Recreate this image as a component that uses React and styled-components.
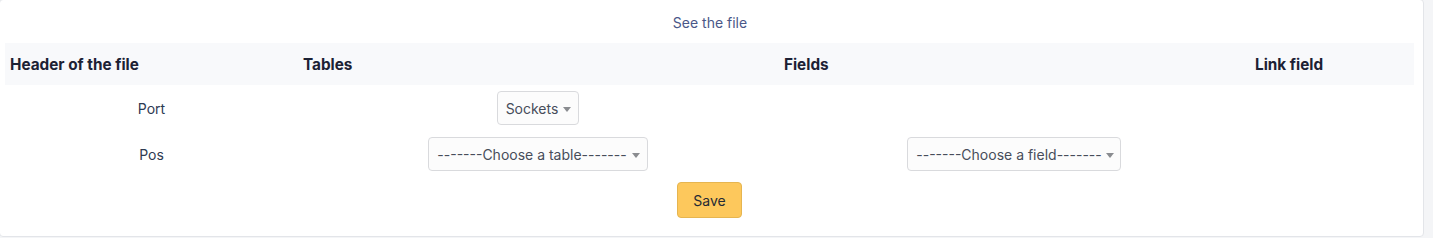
import styled, { createGlobalStyle } from "styled-components";

const GlobalStyle = createGlobalStyle`
  body {
    margin: 0;
    background: #f4f5f7;
    font-family: "Inter", "Liberation Sans", Arial, sans-serif;
    font-size: 14px;
    color: #2b3245;
  }
`;

const Card = styled.div`
  box-sizing: border-box;
  width: 1425px;
  height: 238px;
  margin: -1px 0 0 -1px;
  padding: 14px 10px 0 5px;
  background: #ffffff;
  border: 1px solid #e3e5e9;
  border-radius: 4px;
  display: flex;
  flex-direction: column;
  align-items: stretch;
  overflow: hidden;
`;

const FileLink = styled.a`
  align-self: center;
  line-height: 18px;
  color: #4a5788;
  text-decoration: none;
  margin-bottom: 11px;
  margin-left: 2px;
  cursor: pointer;
`;

const Grid = styled.div`
  display: grid;
  grid-template-columns: 293px 480px 472px 164px;
`;

const HeadCell = styled.div`
  height: 42px;
  background: #f8f9fb;
  display: flex;
  align-items: center;
  padding-left: ${(p) => p.$pad || 5}px;
  font-size: 15.3px;
  font-weight: 700;
  color: #1c2134;
`;

const Cell = styled.div`
  height: 46px;
  display: flex;
  align-items: center;
  justify-content: center;
  color: #2e3a52;
`;

const Select = styled.div`
  height: 34px;
  box-sizing: border-box;
  display: inline-flex;
  align-items: center;
  gap: ${(p) => p.$gap || 6}px;
  padding: 0 ${(p) => p.$right || 9}px 0 8px;
  background: #fcfcfc;
  border: 1px solid #d9dadd;
  border-radius: 4px;
  color: #474d5a;
  cursor: pointer;
`;

const Caret = styled.span`
  width: 0;
  height: 0;
  border-left: 4px solid transparent;
  border-right: 4px solid transparent;
  border-top: 5px solid #8a8c90;
  margin-top: 2px;
`;

const Footer = styled.div`
  display: flex;
  justify-content: center;
  padding-top: 5px;
  padding-left: 1px;
`;

const SaveButton = styled.button`
  width: 65px;
  height: 36px;
  background: #fdc85c;
  border: 1px solid #e6b550;
  border-radius: 4px;
  font-family: inherit;
  font-size: 14px;
  color: #262a35;
  cursor: pointer;
`;

const headers = [
  { label: "Header of the file", pad: 5 },
  { label: "Tables", pad: 5 },
  { label: "Fields", pad: 6 },
  { label: "Link field", pad: 5 },
];

const SelectBox = ({ children, gap, right }) => (
  <Select $gap={gap} $right={right}>
    <span>{children}</span>
    <Caret />
  </Select>
);

export default function App() {
  return (
    <>
      <GlobalStyle />
      <Card>
        <FileLink>See the file</FileLink>
        <Grid>
          {headers.map((h) => (
            <HeadCell key={h.label} $pad={h.pad}>
              {h.label}
            </HeadCell>
          ))}

          <Cell>Port</Cell>
          <Cell>
            <SelectBox gap={5} right={7}>Sockets</SelectBox>
          </Cell>
          <Cell />
          <Cell />

          <Cell>Pos</Cell>
          <Cell>
            <SelectBox gap={5} right={7}>-------Choose a table-------</SelectBox>
          </Cell>
          <Cell>
            <SelectBox gap={4} right={6}>-------Choose a field-------</SelectBox>
          </Cell>
          <Cell />
        </Grid>
        <Footer>
          <SaveButton>Save</SaveButton>
        </Footer>
      </Card>
    </>
  );
}
